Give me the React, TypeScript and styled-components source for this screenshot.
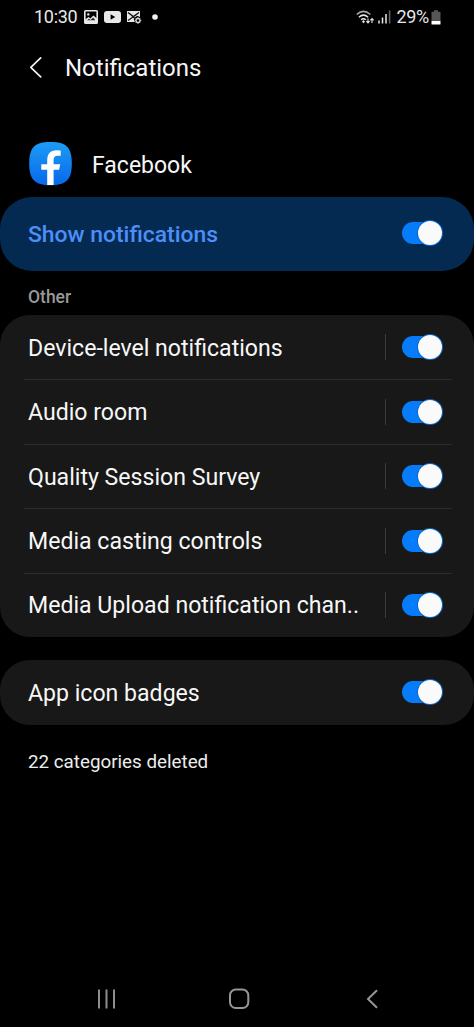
import React from "react";
import styled, { createGlobalStyle } from "styled-components";

const GlobalStyle = createGlobalStyle`
  * { box-sizing: border-box; }
  body { margin: 0; background: #000; }
`;

const Screen = styled.main`
  display: flex;
  flex-direction: column;
  width: 474px;
  height: 1027px;
  overflow: hidden;
  background: #000;
  color: #f7f7f7;
  font-family: Roboto, "Liberation Sans", sans-serif;
`;

const StatusBar = styled.header`
  display: flex;
  justify-content: space-between;
  align-items: center;
  height: 34px;
  padding: 0 33px 0 34px;
  color: #e8e8e8;
`;

const StatusGroup = styled.div`
  display: flex;
  align-items: center;
`;

const StatusText = styled.span<{ $spacing: number }>`
  font-size: 18px;
  line-height: 34px;
  letter-spacing: ${(p) => p.$spacing}px;
`;

const Icon = styled.svg<{ $left?: number }>`
  display: block;
  flex: none;
  margin-left: ${(p) => p.$left ?? 0}px;
`;

const BatteryLevel = styled.div`
  margin-left: 5px;
`;

const TitleBar = styled.div`
  display: flex;
  align-items: center;
  height: 68px;
  padding-left: 28px;
`;

const Title = styled.h1`
  margin: 0 0 0 21px;
  font-size: 24px;
  line-height: 32px;
  font-weight: 400;
`;

const AppHeader = styled.div`
  display: flex;
  align-items: center;
  height: 95px;
  padding: 28px 0 0 29px;
`;

const AppName = styled.h2`
  margin: 4px 0 0 20px;
  font-size: 23px;
  line-height: 30px;
  font-weight: 400;
`;

const Card = styled.section<{ $tone?: "accent"; $top?: number }>`
  margin-top: ${(p) => p.$top ?? 0}px;
  border-radius: ${(p) => (p.$tone ? 32 : 30)}px;
  background: ${(p) => (p.$tone ? "#042a52" : "#181818")};
`;

const Row = styled.div<{ $height: number }>`
  display: flex;
  align-items: center;
  position: relative;
  height: ${(p) => p.$height}px;
  padding: 0 32px 0 28px;

  & + &::before {
    content: "";
    position: absolute;
    top: 0;
    left: 24px;
    right: 22px;
    height: 1px;
    background: #2d2d2d;
  }
`;

const Label = styled.span<{ $accent?: boolean }>`
  flex: 1;
  padding-top: 3px;
  white-space: nowrap;
  font-size: ${(p) => (p.$accent ? 22.9 : 23.1)}px;
  line-height: 30px;
  font-weight: ${(p) => (p.$accent ? 500 : 400)};
  color: ${(p) => (p.$accent ? "#4d8ff8" : "#f7f7f7")};
`;

const Divider = styled.i`
  width: 1px;
  height: 26px;
  margin-right: 15.5px;
  background: #3b3b3b;
`;

const Track = styled.span<{ $lift: number }>`
  display: flex;
  justify-content: flex-end;
  align-items: center;
  width: 40.5px;
  height: 22px;
  margin-bottom: ${(p) => p.$lift}px;
  border-radius: 11px;
  background: #067cfb;
`;

const Knob = styled.span`
  flex: none;
  width: 24px;
  height: 24px;
  border-radius: 50%;
  background: #fafafa;
  box-shadow: 0 0 0 1px #0868c8;
`;

const SectionTitle = styled.h3`
  height: 44.5px;
  margin: 0;
  padding: 15px 0 0 28px;
  font-size: 17.5px;
  line-height: 22px;
  font-weight: 500;
  color: #999;
`;

const Footnote = styled.p`
  margin: 25px 0 0 28px;
  font-size: 18.8px;
  line-height: 24px;
  color: #ededed;
`;

const NavBar = styled.nav`
  display: flex;
  align-items: center;
  justify-content: space-between;
  height: 56px;
  margin-top: auto;
  padding: 0 95px 0 96px;
`;

const Toggle = ({ lift = 0 }: { lift?: number }) => (
  <Track $lift={lift}>
    <Knob />
  </Track>
);

const categories = [
  "Device-level notifications",
  "Audio room",
  "Quality Session Survey",
  "Media casting controls",
  "Media Upload notification chan..",
];

export default function App() {
  return (
    <Screen>
      <GlobalStyle />
      <StatusBar>
        <StatusGroup>
          <StatusText $spacing={-0.3}>10:30</StatusText>
          <Icon $left={7} width="14" height="14" viewBox="0 0 14 14">
            <rect x="0.8" y="0.8" width="12.4" height="12.4" rx="0.8" fill="none" stroke="#e8e8e8" strokeWidth="1.6" />
            <path d="M1 9.6 4.6 7 6.4 8.4 9.4 5.4 13 8.6V13H1Z" fill="#e8e8e8" />
            <path d="M3 10.2 5 8.8 6.6 10 9.2 7.6 11.2 10.2Z" fill="#222" />
            <circle cx="4.3" cy="4.4" r="1.2" fill="#e8e8e8" />
          </Icon>
          <Icon $left={6} width="17" height="12" viewBox="0 0 17 12">
            <rect width="17" height="12" rx="3" fill="#e8e8e8" />
            <path d="M6.6 3.3 11.3 6 6.6 8.7Z" fill="#000" />
          </Icon>
          <Icon $left={6} width="15" height="14" viewBox="0 0 15 14">
            <path d="M0 1H13V7.3A3.4 3.4 0 0 0 8 12H0Z" fill="#e8e8e8" />
            <path d="M1 2.5 6.4 6.6 12 2.5M1 10.5 9.5 4.5M4.5 5.2 8 8.5" fill="none" stroke="#111" strokeWidth="1.3" />
            <circle cx="11" cy="10.5" r="2" fill="none" stroke="#d8d8d8" strokeWidth="1.3" />
            <path d="M11 7.2V8.2M11 12.8V13.8M7.7 10.5H8.7M13.3 10.5H14.3M8.8 8.3 9.4 8.9M12.6 12.1 13.2 12.7M13.2 8.3 12.6 8.9M9.4 12.1 8.8 12.7" stroke="#d8d8d8" />
          </Icon>
          <Icon $left={10} width="6" height="6" viewBox="0 0 6 6">
            <circle cx="3" cy="3" r="2.8" fill="#f2f2f2" />
          </Icon>
        </StatusGroup>
        <StatusGroup>
          <Icon width="19" height="15" viewBox="0 0 19 15" fill="none" stroke="#e8e8e8">
            <path d="M0.7 4.5Q7.5 -1.8 14.3 4.5" stroke="#a8a8a8" strokeWidth="1.5" />
            <path d="M2.9 7.2Q7.5 3 12.1 7.2" strokeWidth="1.5" />
            <path d="M5.1 9.8Q7.5 7.7 9.8 9.8" strokeWidth="1.5" />
            <path d="M7.5 10 9 11.7 7.5 13.3 6 11.7Z" fill="#e8e8e8" stroke="none" />
            <path d="M12 8.5V13M10.4 11.2 12 13 13.6 11.2M16 13V8.5M14.4 10.3 16 8.5 17.6 10.3" strokeWidth="1.1" />
          </Icon>
          <Icon $left={3} width="13" height="14" viewBox="0 0 13 14">
            <path d="M1 10.5V13.5M4.5 7.5V13.5M8 4V13.5" stroke="#e8e8e8" strokeWidth="1.5" />
            <path d="M11.6 0.5V13.5" stroke="#666" strokeWidth="1.5" />
          </Icon>
          <BatteryLevel>
            <StatusText $spacing={-0.3}>29%</StatusText>
          </BatteryLevel>
          <Icon $left={2} width="10" height="15" viewBox="0 0 10 15">
            <path d="M0.5 2.5Q0.5 1.8 1.2 1.8H3V0.3H7V1.8H8.8Q9.5 1.8 9.5 2.5V11H0.5Z" fill="#565656" />
            <path d="M0.5 11H9.5V14Q9.5 14.5 9 14.5H1Q0.5 14.5 0.5 14Z" fill="#fff" />
          </Icon>
        </StatusGroup>
      </StatusBar>

      <TitleBar>
        <Icon width="16" height="24" viewBox="0 0 16 24">
          <path d="M12.7 1.8 2.8 11.3 12.7 20.8" fill="none" stroke="#f5f5f5" strokeWidth="1.7" strokeLinejoin="round" strokeLinecap="round" />
        </Icon>
        <Title>Notifications</Title>
      </TitleBar>

      <AppHeader>
        <Icon width="43" height="44" viewBox="0 0 43 44">
          <defs>
            <linearGradient id="brand" x1="0" y1="0" x2="0" y2="1">
              <stop offset="0" stopColor="#1c9cf5" />
              <stop offset="1" stopColor="#0868ea" />
            </linearGradient>
          </defs>
          <path d="M21.5 0C37.5 0 42.8 5.5 42.8 21.5S37.5 43.2 21.5 43.2 0.2 37.5 0.2 21.5 5.5 0 21.5 0Z" fill="url(#brand)" />
          <path d="M18.2 43.1V27.8H12.3V22.2H18.2V18.5C18.2 11.7 21.5 8.2 27.4 8.2Q30.2 8.2 31.7 8.6V13.8H28.6C25.7 13.8 24.6 15.4 24.6 18V22.2H31.2L30.1 27.8H24.6V43.1Z" fill="#fff" />
        </Icon>
        <AppName>Facebook</AppName>
      </AppHeader>

      <Card $tone="accent">
        <Row $height={73.5}>
          <Label $accent>Show notifications</Label>
          <Toggle lift={1} />
        </Row>
      </Card>

      <SectionTitle>Other</SectionTitle>

      <Card>
        {categories.map((name) => (
          <Row $height={64.45} key={name}>
            <Label>{name}</Label>
            <Divider />
            <Toggle />
          </Row>
        ))}
      </Card>

      <Card $top={23}>
        <Row $height={64.5}>
          <Label>App icon badges</Label>
          <Toggle lift={1} />
        </Row>
      </Card>

      <Footnote>22 categories deleted</Footnote>

      <NavBar>
        <Icon width="21" height="22" viewBox="0 0 21 22">
          <path d="M3 1.5V20.5M10.5 1.5V20.5M18 1.5V20.5" stroke="#8e8e8e" strokeWidth="2" />
        </Icon>
        <Icon width="22" height="22" viewBox="0 0 22 22">
          <rect x="2" y="1.5" width="18.3" height="18.6" rx="5.8" fill="none" stroke="#969696" strokeWidth="2" />
        </Icon>
        <Icon width="18" height="22" viewBox="-4 0 18 22">
          <path d="M12 2.2 3 11 12 19.8" fill="none" stroke="#969696" strokeWidth="2" />
        </Icon>
      </NavBar>
    </Screen>
  );
}
